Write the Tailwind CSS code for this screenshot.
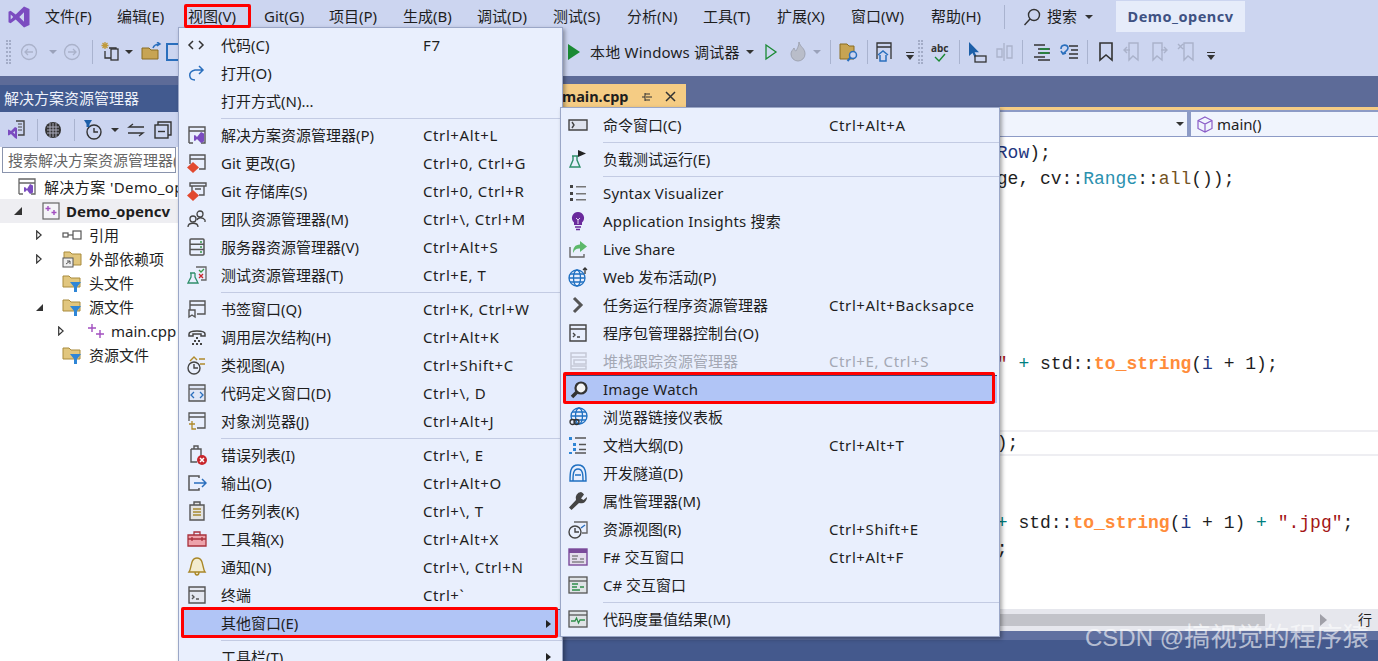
<!DOCTYPE html>
<html lang="zh-CN">
<head>
<meta charset="UTF-8">
<title>Demo_opencv - Microsoft Visual Studio</title>
<script src="https://cdn.jsdelivr.net/npm/@tailwindcss/browser@4"></script>
</head>
<body class="overflow-hidden">
<div class="relative w-[1378px] h-[661px] overflow-hidden flex flex-col bg-[#44598d] text-[15px] leading-none text-[#1e1e1e] font-['Noto_Sans','Noto_Sans_CJK_SC',sans-serif]">

  <!-- 菜单栏 -->
  <div class="h-[34px] shrink-0 flex items-center bg-[#ccd5f0] pb-[1px]">
    <div class="w-[45px] pl-[7px]">
      <svg class="w-[24px] h-[24px]" viewBox="0 0 24 24"><path fill="#7b4cc0" fill-rule="evenodd" d="M17 1.500 22.500 4v16L17 22.500 8.700 14.400 3.600 18.300 1.500 17.200V6.800l2.100-1.100 5.100 3.900zM17 7.300 12.300 12 17 16.700zM3.700 9.400v5.200L6.200 12z"/></svg>
    </div>
    <div class="w-[72px]">文件(F)</div>
    <div class="w-[71px]">编辑(E)</div>
    <div class="w-[76px]">视图(V)</div>
    <div class="w-[65px]">Git(G)</div>
    <div class="w-[74px]">项目(P)</div>
    <div class="w-[74px]">生成(B)</div>
    <div class="w-[76px]">调试(D)</div>
    <div class="w-[74px]">测试(S)</div>
    <div class="w-[76px]">分析(N)</div>
    <div class="w-[74px]">工具(T)</div>
    <div class="w-[74px]">扩展(X)</div>
    <div class="w-[80px]">窗口(W)</div>
    <div class="w-[73px]">帮助(H)</div>
    <div class="w-px h-[24px] bg-[#a9b3cf]"></div>
    <svg class="w-[20px] h-[20px] ml-[17px]" viewBox="0 0 20 20" fill="none" stroke="#333" stroke-width="1.400"><circle cx="12" cy="8" r="5.500"/><path d="M8 12 2.500 18"/></svg>
    <div class="ml-[5px]">搜索</div>
    <div class="ml-[8px] border-x-[4px] border-x-transparent border-t-[4px] border-t-[#333]"></div>
    <div class="ml-[23px] w-[129px] h-[31px] flex items-center justify-center bg-[#e6ecfa] font-bold text-[14.500px] tracking-[0.5px] text-[#3f5283]">Demo_opencv</div>
  </div>

  <!-- 工具栏 -->
  <div class="h-[42px] shrink-0 flex items-center bg-[#ccd5f0] pb-[6px]">
    <div class="ml-[6px] w-[5px] h-[24px] border-x-2 border-dotted border-[#a3acc7]"></div>
    <svg class="ml-[9px] w-[18px] h-[18px]" viewBox="0 0 18 18" fill="none" stroke="#aab2ca" stroke-width="1.300"><circle cx="9" cy="9" r="7.500"/><path d="M13 9H5m3-3L5 9l3 3"/></svg>
    <div class="ml-[11px] border-x-[4px] border-x-transparent border-t-[4px] border-t-[#9aa2ba]"></div>
    <svg class="ml-[6px] w-[18px] h-[18px]" viewBox="0 0 18 18" fill="none" stroke="#aab2ca" stroke-width="1.300"><circle cx="9" cy="9" r="7.500"/><path d="M5 9h8m-3-3 3 3-3 3"/></svg>
    <div class="ml-[11px] w-px h-[24px] bg-[#a9b3cf]"></div>
    <svg class="ml-[7px] w-[22px] h-[22px]" viewBox="0 0 22 22" fill="none" stroke="#333" stroke-width="1.300"><path stroke="#c09a3a" d="M5 1v7M1.500 4.500h7M2.500 2l5 5m0-5-5 5"/><path d="M5 10v7h6M9 7h7v9"/><rect x="11" y="8" width="7" height="11" fill="#ccd5f0"/></svg>
    <div class="ml-[3px] border-x-[4px] border-x-transparent border-t-[4px] border-t-[#333]"></div>
    <svg class="ml-[8px] w-[22px] h-[20px]" viewBox="0 0 22 20"><path fill="#c7a453" stroke="#8a6d22" d="M1 6h7l2 2h7v9H1z"/><path fill="none" stroke="#2a6fbd" stroke-width="1.500" d="M12 6c1-3 3-4 7-4m-3-2 3 2-3 2"/></svg>
    <div class="ml-[3px] w-[16px] h-[18px] border-2 border-[#2a6fbd]"></div>
    <div class="flex-1"></div>
    <!-- 调试器组 -->
    <div class="w-[811px] shrink-0 flex items-center">
      <svg class="w-[14px] h-[18px]" viewBox="0 0 14 18"><path fill="#1a8a34" d="M1 1l12 8-12 8z"/></svg>
      <div class="ml-[9px] tracking-[0.2px]">本地 Windows 调试器</div>
      <div class="ml-[6px] border-x-[4px] border-x-transparent border-t-[4px] border-t-[#333]"></div>
      <svg class="ml-[10px] w-[14px] h-[18px]" viewBox="0 0 14 18" fill="none" stroke="#1a8a34" stroke-width="1.300"><path d="M2 2l10 7-10 7z"/></svg>
      <svg class="ml-[10px] w-[20px] h-[22px]" viewBox="0 0 20 22"><path fill="#b9bdc9" stroke="#9fa4b2" d="M11 1c1 5 6 6 6 12a7 7 0 0 1-14 0c0-3 2-4 3-6 1 2 1 3 2 3 1-2 3-5 3-9z"/></svg>
      <div class="ml-[5px] border-x-[4px] border-x-transparent border-t-[4px] border-t-[#9aa2ba]"></div>
      <div class="ml-[9px] w-px h-[24px] bg-[#a9b3cf]"></div>
      <svg class="ml-[7px] w-[22px] h-[22px]" viewBox="0 0 22 22"><path fill="#c7a453" stroke="#8a6d22" d="M2 3h7l2 2h5v13H2z"/><circle cx="15" cy="14" r="3.500" fill="#ccd5f0" stroke="#2a6fbd" stroke-width="1.500"/><path stroke="#2a6fbd" stroke-width="2" d="m12.500 16.500-3 3.500"/></svg>
      <div class="ml-[7px] w-px h-[24px] bg-[#a9b3cf]"></div>
      <svg class="ml-[6px] w-[20px] h-[22px]" viewBox="0 0 20 22" fill="none" stroke="#333" stroke-width="1.300"><path d="M3 18V2h14v16M3 6h14"/><path stroke="#2a6fbd" stroke-width="1.500" d="m4 14 5-4 5 4m-8 0v6h6v-6"/></svg>
      <div class="ml-[12px] flex flex-col gap-[2px] items-center pt-[8px]"><div class="w-[8px] h-[1px] bg-[#333]"></div><div class="border-x-[4px] border-x-transparent border-t-[5px] border-t-[#333]"></div></div>
      <div class="ml-[4px] w-[5px] h-[24px] border-x-2 border-dotted border-[#a3acc7]"></div>
      <div class="ml-[7px] w-[20px] flex flex-col items-center text-[10px] font-bold leading-[10px] text-[#333]">abc<svg class="w-[12px] h-[9px]" viewBox="0 0 12 9" fill="none" stroke="#1a8a34" stroke-width="1.400"><path d="m1 4 4 4 6-7"/></svg></div>
      <div class="ml-[9px] w-px h-[24px] bg-[#a9b3cf]"></div>
      <svg class="ml-[6px] w-[22px] h-[22px]" viewBox="0 0 22 22"><path fill="#1c5fa8" d="M3 1v14l3.500-3 2.500 5 2-1-2.400-4.800H13z"/><rect x="9" y="15" width="11" height="6" fill="#ccd5f0" stroke="#333" stroke-width="1.300"/></svg>
      <svg class="ml-[7px] w-[18px] h-[22px]" viewBox="0 0 18 22" fill="none" stroke="#aab2ca" stroke-width="1.300"><path d="M2 8h5v8H2zM9 2v18M12 5h5v12h-5z"/></svg>
      <div class="ml-[9px] w-px h-[24px] bg-[#a9b3cf]"></div>
      <svg class="ml-[10px] w-[18px] h-[18px]" viewBox="0 0 18 18" fill="none" stroke="#333" stroke-width="1.400"><path d="M1 2h11M5 6h12M5 10h12M1 14h11M5 17h12"/><path stroke="#1a8a34" d="M7 6h9m-9 4h9"/></svg>
      <svg class="ml-[8px] w-[20px] h-[20px]" viewBox="0 0 20 20" fill="none" stroke="#333" stroke-width="1.400"><path d="M10 4h9M12 8h7M10 12h9M10 16h9"/><path stroke="#2a6fbd" stroke-width="1.600" d="M2 7c0-5 7-5 7-1 0 3-3 3-5 6m-2-3 2 3 3-1"/></svg>
      <div class="ml-[8px] w-px h-[24px] bg-[#a9b3cf]"></div>
      <svg class="ml-[9px] w-[18px] h-[20px]" viewBox="0 0 18 20" fill="none" stroke="#333" stroke-width="1.600"><path d="M3 1h12v17l-6-5-6 5z"/></svg>
      <svg class="ml-[8px] w-[18px] h-[20px]" viewBox="0 0 18 20" fill="none" stroke="#aab2ca" stroke-width="1.400"><path d="M6 1h9v17l-5-4-4 4zM7 8H1m3-3L1 8l3 3"/></svg>
      <svg class="ml-[9px] w-[18px] h-[20px]" viewBox="0 0 18 20" fill="none" stroke="#aab2ca" stroke-width="1.400"><path d="M3 1h9v17l-5-4-4 4zM11 8h6m-3-3 3 3-3 3"/></svg>
      <svg class="ml-[9px] w-[18px] h-[20px]" viewBox="0 0 18 20" fill="none" stroke="#aab2ca" stroke-width="1.400"><path d="M7 1h9v17l-5-4-4 4zM1 2l5 5m0-5L1 7"/></svg>
      <div class="ml-[12px] flex flex-col gap-[2px] items-center pt-[8px]"><div class="w-[8px] h-[1px] bg-[#333]"></div><div class="border-x-[4px] border-x-transparent border-t-[5px] border-t-[#333]"></div></div>
    </div>
  </div>

  <!-- 主区域 -->
  <div class="flex-1 min-h-0 flex">

    <!-- 解决方案资源管理器 -->
    <div class="w-[178px] shrink-0 flex flex-col bg-white">
      <div class="h-[9px] bg-[#5d6b98]"></div>
      <div class="h-[27px] flex items-center pl-[4px] bg-[#425a8f] text-[#eef1fa] whitespace-nowrap">解决方案资源管理器</div>
      <div class="h-[35px] flex items-center bg-[#ccd5f0]">
        <svg class="ml-[7px] w-[20px] h-[20px]" viewBox="0 0 20 20"><path fill="none" stroke="#444" stroke-width="1.400" d="M9 1h8v14h-6"/><path stroke="#444" d="M11 4h4M11 7h4M11 10h4"/><path fill="#7b4cc0" fill-rule="evenodd" d="M10 8v11l-2-1-4-4-2.300 1.500L1 15v-5l.7-.5L4 11l4-4zM8 11l-2 1.500L8 14z"/></svg>
        <div class="ml-[10px] w-px h-[22px] bg-[#a9b3cf]"></div>
        <svg class="ml-[6px] w-[18px] h-[18px]" viewBox="0 0 18 18"><circle cx="9" cy="9" r="8" fill="#333"/><path stroke="#aab" d="M3 6h12M3 9h12M3 12h12M6 2v14M9 2v14M12 2v14"/></svg>
        <div class="ml-[12px] w-px h-[22px] bg-[#a9b3cf]"></div>
        <svg class="ml-[8px] w-[22px] h-[22px]" viewBox="0 0 22 22" fill="none" stroke="#333" stroke-width="1.400"><circle cx="11" cy="13" r="7"/><path d="M11 9v4h4"/><path fill="#1c5fa8" stroke="none" d="M1 1h8L6.500 5v3h-3V5z"/></svg>
        <div class="ml-[6px] border-x-[4px] border-x-transparent border-t-[4px] border-t-[#333]"></div>
        <svg class="ml-[8px] w-[18px] h-[14px]" viewBox="0 0 18 14" fill="none" stroke="#333" stroke-width="1.300"><path d="M17 4H2l4-3M1 10h15l-4 3"/></svg>
        <svg class="ml-[9px] w-[18px] h-[18px]" viewBox="0 0 18 18" fill="none" stroke="#333" stroke-width="1.400"><path d="M4 4V1h13v13h-3"/><rect x="1" y="4" width="13" height="13" fill="#ccd5f0"/><path d="M4 10.500h7"/></svg>
      </div>
      <div class="mx-[2px] h-[26px] pl-[5px] flex items-center bg-white border border-[#8a94ad] text-[#666] overflow-hidden whitespace-nowrap">搜索解决方案资源管理器(Ctrl+;)</div>

      <div class="pt-[2px] overflow-hidden whitespace-nowrap">
        <div class="h-[24px] flex items-center pl-[18px]">
          <svg class="shrink-0 w-[18px] h-[18px]" viewBox="0 0 18 18"><path fill="none" stroke="#666" stroke-width="1.300" d="M1 16V1h16v15H13M1 5h16M1 16h4"/><path fill="#7b4cc0" d="m12 6 3 1.500v7L12 16l-3-4-2 2-1-.5v-4l1-.5 2 2z"/></svg>
          <span class="ml-[8px] tracking-[0.4px]">解决方案 'Demo_opencv'</span>
        </div>
        <div class="h-[24px] flex items-center bg-[#eeeef2] pl-[14px]">
          <svg class="shrink-0 w-[8px] h-[8px]" viewBox="0 0 8 8"><path fill="#333" d="M8 0v8H0z"/></svg>
          <svg class="shrink-0 ml-[20px] w-[18px] h-[18px]" viewBox="0 0 18 18" fill="none" stroke="#666" stroke-width="1.200"><rect x="1" y="1" width="16" height="16" fill="#f4f4f8"/><path stroke="#a24fc0" stroke-width="1.400" d="M6 4v5M3.500 6.500h5M12 8v5M9.500 10.500h5"/></svg>
          <span class="ml-[6px] font-bold">Demo_opencv</span>
        </div>
        <div class="h-[24px] flex items-center pl-[36px]">
          <svg class="shrink-0 w-[6px] h-[10px]" viewBox="0 0 6 10" fill="none" stroke="#333" stroke-width="1.200"><path d="m.7 1 4.500 4-4.500 4z"/></svg>
          <svg class="shrink-0 ml-[20px] w-[20px] h-[10px]" viewBox="0 0 20 10" fill="none" stroke="#555" stroke-width="1.200"><rect x="1" y="3" width="5" height="4"/><rect x="11" y="1" width="8" height="8"/><path d="M6 5h5"/></svg>
          <span class="ml-[7px]">引用</span>
        </div>
        <div class="h-[24px] flex items-center pl-[36px]">
          <svg class="shrink-0 w-[6px] h-[10px]" viewBox="0 0 6 10" fill="none" stroke="#333" stroke-width="1.200"><path d="m.7 1 4.500 4-4.500 4z"/></svg>
          <svg class="shrink-0 ml-[20px] w-[20px] h-[18px]" viewBox="0 0 20 18"><path fill="#e1c67e" stroke="#a98b3c" d="M2 2h6l2 2h9v11H2z"/><rect x="1" y="8" width="10" height="9" fill="#eee" stroke="#555"/><path stroke="#555" fill="none" d="m4 14 4-3m-3 0h3v3"/></svg>
          <span class="ml-[7px]">外部依赖项</span>
        </div>
        <div class="h-[24px] flex items-center pl-[62px]">
          <svg class="shrink-0 w-[20px] h-[18px]" viewBox="0 0 20 18"><path fill="#e1c67e" stroke="#a98b3c" d="M1 2h6l2 2h9v9H1z"/><path fill="#2f86d6" d="M8 8h11l-4 5v5h-3v-5z"/></svg>
          <span class="ml-[7px]">头文件</span>
        </div>
        <div class="h-[24px] flex items-center pl-[36px]">
          <svg class="shrink-0 w-[7px] h-[7px]" viewBox="0 0 8 8"><path fill="#333" d="M8 0v8H0z"/></svg>
          <svg class="shrink-0 ml-[19px] w-[20px] h-[18px]" viewBox="0 0 20 18"><path fill="#e1c67e" stroke="#a98b3c" d="M1 2h6l2 2h9v9H1z"/><path fill="#2f86d6" d="M8 8h11l-4 5v5h-3v-5z"/></svg>
          <span class="ml-[7px]">源文件</span>
        </div>
        <div class="h-[24px] flex items-center pl-[58px]">
          <svg class="shrink-0 w-[6px] h-[10px]" viewBox="0 0 6 10" fill="none" stroke="#333" stroke-width="1.200"><path d="m.7 1 4.500 4-4.500 4z"/></svg>
          <svg class="shrink-0 ml-[22px] w-[20px] h-[18px]" viewBox="0 0 20 18" fill="none" stroke="#a24fc0" stroke-width="1.400"><path d="M6 2v8M2 6h8M14 8v8M10 12h8"/></svg>
          <span class="ml-[5px]">main.cpp</span>
        </div>
        <div class="h-[24px] flex items-center pl-[62px]">
          <svg class="shrink-0 w-[20px] h-[18px]" viewBox="0 0 20 18"><path fill="#e1c67e" stroke="#a98b3c" d="M1 2h6l2 2h9v9H1z"/><path fill="#2f86d6" d="M8 8h11l-4 5v5h-3v-5z"/></svg>
          <span class="ml-[7px]">资源文件</span>
        </div>
      </div>
    </div>

    <!-- 编辑器 -->
    <div class="flex-1 min-w-0 flex flex-col">
      <div class="h-[31px] shrink-0 bg-[#5d6b98] flex items-end pl-[352px]">
        <div class="w-[156px] h-[23px] bg-[#f5cc84] flex items-center font-bold pl-[32px] pt-[2px] text-[14.500px]">
          <span>main.cpp</span>
          <svg class="ml-[13px] w-[12px] h-[12px]" viewBox="0 0 12 12" fill="none" stroke="#333"><path d="M11 6H5M4 2v8M4 3h5M4 9h5M1 6h3"/></svg>
          <svg class="ml-[12px] w-[11px] h-[11px]" viewBox="0 0 11 11" fill="none" stroke="#333" stroke-width="1.500"><path d="m1 1 9 9m0-9-9 9"/></svg>
        </div>
      </div>
      <div class="h-[3px] shrink-0 bg-[#f5cc84]"></div>
      <div class="h-[27px] shrink-0 flex items-stretch bg-[#8d9bc6] pt-[2px] pb-[1px] gap-[4px]">
        <div class="w-[1009px] bg-[#f0f4fd] flex items-center justify-end pr-[3px]"><div class="border-x-[4px] border-x-transparent border-t-[4px] border-t-[#333]"></div></div>
        <div class="flex-1 bg-[#f0f4fd] flex items-center pl-[6px]">
          <svg class="w-[16px] h-[17px]" viewBox="0 0 16 17" fill="none" stroke="#8a5cc7" stroke-width="1.200"><path d="m8 1 7 3.500v8L8 16l-7-3.500v-8zM1 4.500 8 8l7-3.500M8 8v8"/></svg>
          <span class="ml-[4px]">main()</span>
        </div>
      </div>
      <div class="flex-1 min-h-0 relative bg-white overflow-hidden whitespace-nowrap font-['Liberation_Mono',monospace] text-[18px] leading-[26.4px] pl-[818.8px] pt-[3px]">
        <div class="absolute left-0 right-0 top-[293px] h-[26px] border-y-2 border-[#eeeef2]"></div>
        <div class="relative">
          <div class="h-[26.400px]"><span class="text-[#1f377f]">Row</span>);</div>
          <div class="h-[26.400px]">ge, cv::<span class="text-[#2b91af]">Range</span>::<span class="text-[#74531f]">all</span>());</div>
          <div class="h-[158.400px]"></div>
          <div class="h-[26.400px]"><span class="text-[#a31515]">"</span> <span class="text-[#008080]">+</span> std::<span class="text-[#ff8c3a] font-bold">to_string</span>(<span class="text-[#1f377f]">i</span> + 1);</div>
          <div class="h-[52.800px]"></div>
          <div class="h-[26.400px]">);</div>
          <div class="h-[52.800px]"></div>
          <div class="h-[26.400px]"><span class="text-[#008080]">+</span> std::<span class="text-[#ff8c3a] font-bold">to_string</span>(<span class="text-[#1f377f]">i</span> + 1) <span class="text-[#008080]">+</span> <span class="text-[#a31515]">".jpg"</span>;</div>
          <div class="h-[26.400px]">;</div>
        </div>
      </div>
      <div class="h-[22px] shrink-0 bg-[#e6e7ed] flex items-center">
        <div class="w-[1087px] h-[12px] bg-[#c2c3c9]"></div>
        <div class="ml-[55px] w-0 h-0 border-y-[6px] border-y-transparent border-l-[7px] border-l-[#a0a0a8]"></div>
        <div class="ml-[31px] text-[14px]">行</div>
      </div>
      <div class="h-[9px] shrink-0 bg-[#6070a0]"></div>
      <div class="h-[21px] shrink-0 bg-[#44598d]"></div>
    </div>
  </div>

  <!-- 视图菜单 -->
  <div class="absolute left-[178px] top-[27px] w-[385px] h-[650px] bg-[#e9effd] border border-[#9ba7c7] pt-[3px] shadow-[2px_2px_4px_rgba(0,0,0,0.35)] [&>div>span:nth-child(3)]:tracking-[0.6px]">
    <div class="grid grid-cols-[42px_202px_1fr] h-[28px] items-center"><svg class="ml-[8px] w-[18px] h-[18px]" viewBox="0 0 18 18" fill="none" stroke="#333" stroke-width="1.500"><path d="M6 5 2 9l4 4M12 5l4 4-4 4"/></svg><span>代码(C)</span><span>F7</span></div>
    <div class="grid grid-cols-[42px_202px_1fr] h-[28px] items-center"><svg class="ml-[8px] w-[18px] h-[18px]" viewBox="0 0 18 18" fill="none" stroke="#2a6fbd" stroke-width="1.500"><path d="M8 16C2 16 0 8 8 6h8m-4-4 4 4-4 4"/></svg><span>打开(O)</span><span></span></div>
    <div class="grid grid-cols-[42px_202px_1fr] h-[28px] items-center"><span></span><span>打开方式(N)...</span><span></span></div>
    <div class="h-[6px] flex items-center pl-[42px]"><div class="w-full h-px bg-[#c3cbe3]"></div></div>
    <div class="grid grid-cols-[42px_202px_1fr] h-[28px] items-center"><svg class="ml-[8px] w-[20px] h-[20px]" viewBox="0 0 20 20"><path fill="none" stroke="#555" stroke-width="1.400" d="M2 18V2h16v16h-4M2 6h16M2 18h4"/><path fill="#7b4cc0" d="m14 7 3 1.500v8L14 18l-4-4-2 2-1-.5v-5l1-.5 2 2z"/></svg><span>解决方案资源管理器(P)</span><span>Ctrl+Alt+L</span></div>
    <div class="grid grid-cols-[42px_202px_1fr] h-[28px] items-center"><svg class="ml-[8px] w-[20px] h-[20px]" viewBox="0 0 20 20"><path fill="none" stroke="#555" stroke-width="1.400" d="M3 11V2h15v14h-6M3 6h15"/><path fill="#e2492f" d="m6 9 6 5.500L6 20l-6-5.500z"/></svg><span>Git 更改(G)</span><span>Ctrl+0, Ctrl+G</span></div>
    <div class="grid grid-cols-[42px_202px_1fr] h-[28px] items-center"><svg class="ml-[8px] w-[20px] h-[20px]" viewBox="0 0 20 20"><path fill="none" stroke="#555" stroke-width="1.400" d="M3 2h16v3H3zM5 5v6M17 5v9h-5M8 8h6"/><path fill="#e2492f" d="m6 9 6 5.500L6 20l-6-5.500z"/></svg><span>Git 存储库(S)</span><span>Ctrl+0, Ctrl+R</span></div>
    <div class="grid grid-cols-[42px_202px_1fr] h-[28px] items-center"><svg class="ml-[8px] w-[20px] h-[20px]" viewBox="0 0 20 20" fill="none" stroke="#444" stroke-width="1.300"><circle cx="13" cy="5" r="3"/><path d="M10 11c1-3 6-3 8 0v2"/><circle cx="6" cy="10" r="3" fill="#e9effd"/><path d="M1 18c0-5 10-5 10 0"/></svg><span>团队资源管理器(M)</span><span>Ctrl+\, Ctrl+M</span></div>
    <div class="grid grid-cols-[42px_202px_1fr] h-[28px] items-center"><svg class="ml-[8px] w-[20px] h-[20px]" viewBox="0 0 20 20" fill="none" stroke="#555" stroke-width="1.500"><rect x="3" y="2" width="14" height="16" rx="1"/><path d="M3 7.300h14M3 12.600h14"/><path stroke="#3a9a4a" d="M13 5h2M13 10h2M13 15h2"/></svg><span>服务器资源管理器(V)</span><span>Ctrl+Alt+S</span></div>
    <div class="grid grid-cols-[42px_202px_1fr] h-[28px] items-center"><svg class="ml-[8px] w-[20px] h-[20px]" viewBox="0 0 20 20" fill="none" stroke-width="1.300"><path stroke="#666" d="M9 2h10v13h-5"/><path stroke="#2f8f6b" d="M3 8h5M4 8v4l-3 6h10l-3-6V8"/><path stroke="#3a9a4a" d="m12 5 2 2 3-3"/><path stroke="#c8262c" d="m12 9 4 4m0-4-4 4"/></svg><span>测试资源管理器(T)</span><span>Ctrl+E, T</span></div>
    <div class="h-[6px] flex items-center pl-[42px]"><div class="w-full h-px bg-[#c3cbe3]"></div></div>
    <div class="grid grid-cols-[42px_202px_1fr] h-[28px] items-center"><svg class="ml-[8px] w-[20px] h-[20px]" viewBox="0 0 20 20" fill="none" stroke="#555" stroke-width="1.400"><path d="M3 11V2h15v13h-8M3 6h15M2 11h6v7l-3-2-3 2z"/></svg><span>书签窗口(Q)</span><span>Ctrl+K, Ctrl+W</span></div>
    <div class="grid grid-cols-[42px_202px_1fr] h-[28px] items-center"><svg class="ml-[8px] w-[20px] h-[20px]" viewBox="0 0 20 20"><path fill="none" stroke="#444" stroke-width="1.500" d="M2 7c0-4 16-4 16 0v2h-4V7H6v2H2z"/><path stroke="#444" stroke-width="2" stroke-dasharray="2 2" d="M9 11h2M7 14h6M5 17h10"/></svg><span>调用层次结构(H)</span><span>Ctrl+Alt+K</span></div>
    <div class="grid grid-cols-[42px_202px_1fr] h-[28px] items-center"><svg class="ml-[8px] w-[20px] h-[20px]" viewBox="0 0 20 20" fill="none" stroke-width="1.400"><circle cx="7" cy="13" r="6" stroke="#444"/><path stroke="#444" d="M7 9v4h4"/><path stroke="#b08a2c" d="m3 6 4-4 3 3M12 4h6M13 9h5"/></svg><span>类视图(A)</span><span>Ctrl+Shift+C</span></div>
    <div class="grid grid-cols-[42px_202px_1fr] h-[28px] items-center"><svg class="ml-[8px] w-[20px] h-[20px]" viewBox="0 0 20 20" fill="none" stroke-width="1.300"><path fill="#dfe6f6" stroke="#555" d="M2 2h16v16H2z"/><path stroke="#555" d="M2 6h16"/><path stroke="#2a6fbd" d="M7 9l-3 3 3 3M13 9l3 3-3 3"/></svg><span>代码定义窗口(D)</span><span>Ctrl+\, D</span></div>
    <div class="grid grid-cols-[42px_202px_1fr] h-[28px] items-center"><svg class="ml-[8px] w-[20px] h-[20px]" viewBox="0 0 20 20" fill="none" stroke-width="1.300"><path stroke="#555" d="M2 10V2h16v15h-8M2 6h16"/><path stroke="#b08a2c" d="M5 10v8h4M2 13h6"/></svg><span>对象浏览器(J)</span><span>Ctrl+Alt+J</span></div>
    <div class="h-[6px] flex items-center pl-[42px]"><div class="w-full h-px bg-[#c3cbe3]"></div></div>
    <div class="grid grid-cols-[42px_202px_1fr] h-[28px] items-center"><svg class="ml-[8px] w-[20px] h-[20px]" viewBox="0 0 20 20" fill="none"><path stroke="#555" stroke-width="1.400" d="M4 4h10v8M4 4v13h6M7 4V1h4v3"/><circle cx="15" cy="15" r="5" fill="#c8262c"/><path stroke="#fff" stroke-width="1.500" d="m13 13 4 4m0-4-4 4"/></svg><span>错误列表(I)</span><span>Ctrl+\, E</span></div>
    <div class="grid grid-cols-[42px_202px_1fr] h-[28px] items-center"><svg class="ml-[8px] w-[20px] h-[20px]" viewBox="0 0 20 20" fill="none" stroke-width="1.500"><path stroke="#555" d="M12 5V3H2v14h10v-2"/><path stroke="#2a6fbd" d="M7 10h12m-4-4 4 4-4 4"/></svg><span>输出(O)</span><span>Ctrl+Alt+O</span></div>
    <div class="grid grid-cols-[42px_202px_1fr] h-[28px] items-center"><svg class="ml-[8px] w-[20px] h-[20px]" viewBox="0 0 20 20" fill="none" stroke-width="1.400"><path fill="#e3e3e3" stroke="#555" d="M3 4h14v15H3zM7 4V1h6v3"/><path stroke="#a88a32" d="M6 8h8M6 11h8M6 14h8"/></svg><span>任务列表(K)</span><span>Ctrl+\, T</span></div>
    <div class="grid grid-cols-[42px_202px_1fr] h-[28px] items-center"><svg class="ml-[8px] w-[20px] h-[20px]" viewBox="0 0 20 20" fill="none" stroke="#a8323c" stroke-width="1.300"><path fill="#eda3ab" d="M1 6h18v11H1z"/><path d="M7 6V3h6v3M1 10h18M5 8v4M15 8v4"/></svg><span>工具箱(X)</span><span>Ctrl+Alt+X</span></div>
    <div class="grid grid-cols-[42px_202px_1fr] h-[28px] items-center"><svg class="ml-[8px] w-[20px] h-[20px]" viewBox="0 0 20 20" fill="none" stroke="#a98728" stroke-width="1.400"><path fill="#f3eccf" d="M10 1c-7 0-5 10-8 14h16C15 11 17 1 10 1zM8 15c0 4 4 4 4 0"/></svg><span>通知(N)</span><span>Ctrl+\, Ctrl+N</span></div>
    <div class="grid grid-cols-[42px_202px_1fr] h-[28px] items-center"><svg class="ml-[8px] w-[20px] h-[20px]" viewBox="0 0 20 20" fill="none" stroke="#555" stroke-width="1.400"><path fill="#e4e7f0" d="M2 2h16v16H2z"/><path d="M2 6h16M5 10l2 2-2 2M9 14h3"/></svg><span>终端</span><span>Ctrl+`</span></div>
    <div class="relative grid grid-cols-[40px_202px_1fr] h-[28px] items-center mx-[2px] bg-[#b1c5f6] border-t border-[#34497e]"><span></span><span>其他窗口(E)</span><span></span><div class="absolute right-[9px] top-[10px] w-0 h-0 border-y-[4px] border-y-transparent border-l-[5px] border-l-[#222]"></div></div>
    <div class="h-[6px] flex items-center pl-[42px]"><div class="w-full h-px bg-[#c3cbe3]"></div></div>
    <div class="relative grid grid-cols-[42px_202px_1fr] h-[28px] items-center"><span></span><span>工具栏(T)</span><span></span><div class="absolute right-[11px] top-[10px] w-0 h-0 border-y-[4px] border-y-transparent border-l-[5px] border-l-[#222]"></div></div>
  </div>

  <!-- 其他窗口子菜单 -->
  <div class="absolute left-[560px] top-[107px] w-[440px] h-[530px] bg-[#e9effd] border border-[#9ba7c7] pt-[3px] shadow-[2px_2px_4px_rgba(0,0,0,0.35)] [&>div>span:nth-child(3)]:tracking-[0.6px]">
    <div class="grid grid-cols-[42px_226px_1fr] h-[28px] items-center"><svg class="ml-[7px] w-[20px] h-[20px]" viewBox="0 0 20 20" fill="none" stroke="#444" stroke-width="1.400"><path fill="#dfe3ee" d="M1 5h18v10H1z"/><path d="m4 7 2 3-2 3"/></svg><span>命令窗口(C)</span><span>Ctrl+Alt+A</span></div>
    <div class="h-[6px] flex items-center pl-[42px]"><div class="w-full h-px bg-[#c3cbe3]"></div></div>
    <div class="grid grid-cols-[42px_226px_1fr] h-[28px] items-center"><svg class="ml-[7px] w-[20px] h-[20px]" viewBox="0 0 20 20"><path fill="none" stroke="#2f8f6b" stroke-width="1.400" d="M4 7h6M5 7v4l-3 7h10l-3-7V7"/><path fill="#222" d="M10 1v7l8-3.500z"/></svg><span>负载测试运行(E)</span><span></span></div>
    <div class="h-[6px] flex items-center pl-[42px]"><div class="w-full h-px bg-[#c3cbe3]"></div></div>
    <div class="grid grid-cols-[42px_226px_1fr] h-[28px] items-center"><svg class="ml-[7px] w-[20px] h-[20px]" viewBox="0 0 20 20" fill="#444"><path d="M2 2h3v3H2zM2 9h3v3H2zM2 15h3v3H2z"/><path fill="#777" d="M8 3h10v1.500H8zM8 10h10v1.500H8zM8 16h10v1.500H8z"/></svg><span class="tracking-[0.15px]">Syntax Visualizer</span><span></span></div>
    <div class="grid grid-cols-[42px_226px_1fr] h-[28px] items-center"><svg class="ml-[7px] w-[20px] h-[20px]" viewBox="0 0 20 20"><path fill="#6a2a9c" d="M10 1a6 6 0 0 0-4 10.500V14h8v-2.500A6 6 0 0 0 10 1z"/><path stroke="#6a2a9c" stroke-width="1.500" d="M7 16h6M8 18.500h4"/><path stroke="#e5d7f2" fill="none" d="m8 7 2 2 2-2M10 9v4"/></svg><span class="tracking-[0.2px]">Application Insights 搜索</span><span></span></div>
    <div class="grid grid-cols-[42px_226px_1fr] h-[28px] items-center"><svg class="ml-[7px] w-[20px] h-[20px]" viewBox="0 0 20 20"><path fill="none" stroke="#666" stroke-width="1.400" d="M2 8v10h14v-3"/><path fill="#5cb86a" d="M12 2v3.500C7 5.500 5 9 5 14c2-4 4-4.500 7-4.500V13l7-5.500z"/></svg><span>Live Share</span><span></span></div>
    <div class="grid grid-cols-[42px_226px_1fr] h-[28px] items-center"><svg class="ml-[7px] w-[20px] h-[20px]" viewBox="0 0 20 20" fill="none" stroke="#1f70c1" stroke-width="1.300"><circle cx="9" cy="11" r="8"/><ellipse cx="9" cy="11" rx="3.500" ry="8"/><path d="M1 11h16M2 7h14M2 15h14"/><path stroke="#333" d="M17 7V1m-2 2 2-2 2 2"/></svg><span>Web 发布活动(P)</span><span></span></div>
    <div class="grid grid-cols-[42px_226px_1fr] h-[28px] items-center"><svg class="ml-[7px] w-[20px] h-[20px]" viewBox="0 0 20 20" fill="none" stroke="#555" stroke-width="3"><path d="m6 3 7 7-7 7"/></svg><span>任务运行程序资源管理器</span><span>Ctrl+Alt+Backsapce</span></div>
    <div class="grid grid-cols-[42px_226px_1fr] h-[28px] items-center"><svg class="ml-[7px] w-[20px] h-[20px]" viewBox="0 0 20 20" fill="none" stroke="#444" stroke-width="1.400"><path d="M2 2h16v16H2zM2 6h16M5 10l2 2-2 2M9 14h3"/></svg><span>程序包管理器控制台(O)</span><span></span></div>
    <div class="grid grid-cols-[42px_226px_1fr] h-[28px] items-center text-[#a4a8b4]"><svg class="ml-[7px] w-[20px] h-[20px]" viewBox="0 0 20 20" fill="none" stroke="#c5c9d6" stroke-width="1.500"><path d="M3 2h15v4H3zM6 9h12v4H6zM3 15h15v3H3zM3 6v9"/></svg><span>堆栈跟踪资源管理器</span><span>Ctrl+E, Ctrl+S</span></div>
    <div class="grid grid-cols-[40px_226px_1fr] h-[28px] items-center mx-[2px] bg-[#b1c5f6] border-t border-[#34497e]"><svg class="ml-[6px] w-[20px] h-[20px]" viewBox="0 0 20 20" fill="none"><circle cx="12" cy="8" r="5.500" fill="#f4f4f4" stroke="#333" stroke-width="2.200"/><path stroke="#333" stroke-width="3.500" d="M8 12 3 17"/></svg><span class="tracking-[0.2px]">Image Watch</span><span></span></div>
    <div class="grid grid-cols-[42px_226px_1fr] h-[28px] items-center"><svg class="ml-[7px] w-[20px] h-[20px]" viewBox="0 0 20 20" fill="none" stroke="#1f70c1" stroke-width="1.300"><circle cx="11" cy="9" r="8"/><ellipse cx="11" cy="9" rx="3.500" ry="8"/><path d="M3 9h16M4 5h14M4 13h14"/><circle cx="4.500" cy="15" r="2.500" fill="#e9effd" stroke="#333"/><circle cx="8.500" cy="15" r="2.500" stroke="#333"/></svg><span>浏览器链接仪表板</span><span></span></div>
    <div class="grid grid-cols-[42px_226px_1fr] h-[28px] items-center"><svg class="ml-[7px] w-[20px] h-[20px]" viewBox="0 0 20 20"><path fill="#2f86d6" d="M1 2h3v3H1zM5 8h3v3H5zM5 13h3v3H5zM1 17h3v2H1z"/><path stroke="#555" stroke-width="1.400" d="M7 3h11M11 9.500h7M11 14.500h7M7 18h11"/></svg><span>文档大纲(D)</span><span>Ctrl+Alt+T</span></div>
    <div class="grid grid-cols-[42px_226px_1fr] h-[28px] items-center"><svg class="ml-[7px] w-[20px] h-[20px]" viewBox="0 0 20 20" fill="none" stroke="#1f70c1" stroke-width="1.400"><path d="M2 18C2 10 2 2 10 2s8 8 8 16z"/><path d="M5 18c0-6 0-12 5-12s5 6 5 12M7 12h6"/></svg><span>开发隧道(D)</span><span></span></div>
    <div class="grid grid-cols-[42px_226px_1fr] h-[28px] items-center"><svg class="ml-[7px] w-[20px] h-[20px]" viewBox="0 0 20 20"><path fill="#444" d="M13 1a6 6 0 0 0-5 8L1 16.500 3.500 19l7.500-7a6 6 0 0 0 8-6l-3.500 3L13 7.500 16 3.500A6 6 0 0 0 13 1z"/></svg><span>属性管理器(M)</span><span></span></div>
    <div class="grid grid-cols-[42px_226px_1fr] h-[28px] items-center"><svg class="ml-[7px] w-[20px] h-[20px]" viewBox="0 0 20 20" fill="none" stroke="#444" stroke-width="1.400"><path stroke="#666" d="M6 3h13v11h-5"/><circle cx="7" cy="13" r="6" fill="#e9effd"/><path d="M7 9v4h4"/><path stroke="#2a6fbd" d="m13 9 4-3"/></svg><span>资源视图(R)</span><span>Ctrl+Shift+E</span></div>
    <div class="grid grid-cols-[42px_226px_1fr] h-[28px] items-center"><svg class="ml-[7px] w-[20px] h-[20px]" viewBox="0 0 20 20"><rect x="1" y="2" width="18" height="16" fill="#e3dcec" stroke="#7a4a9a" stroke-width="1.400"/><path fill="#7a4a9a" d="M1 2h18v4H1z"/><path stroke="#555" d="M4 9h6M4 12h5M12 12h4M4 15h12"/></svg><span>F# 交互窗口</span><span>Ctrl+Alt+F</span></div>
    <div class="grid grid-cols-[42px_226px_1fr] h-[28px] items-center"><svg class="ml-[7px] w-[20px] h-[20px]" viewBox="0 0 20 20" fill="none" stroke="#555" stroke-width="1.300"><rect x="1" y="2" width="18" height="16" fill="#dfe3e6"/><path d="M1 6h18"/><path stroke="#2f8f4a" d="M4 9h6M4 12h5M12 12h4M4 15h8"/></svg><span>C# 交互窗口</span><span></span></div>
    <div class="h-[6px] flex items-center pl-[42px]"><div class="w-full h-px bg-[#c3cbe3]"></div></div>
    <div class="grid grid-cols-[42px_226px_1fr] h-[28px] items-center"><svg class="ml-[7px] w-[20px] h-[20px]" viewBox="0 0 20 20" fill="none" stroke="#555" stroke-width="1.300"><rect x="1" y="2" width="18" height="16" fill="#dfe3e6"/><path d="M1 6h18"/><path stroke="#2f8f4a" d="M3 12h4l1.500-3 2 5 1.500-3h5"/></svg><span>代码度量值结果(M)</span><span></span></div>
  </div>

  <!-- 红色标注框 -->
  <div class="absolute left-[184px] top-[4px] w-[67px] h-[24px] border-[3px] border-[#ff0000] rounded-[2px]"></div>
  <div class="absolute left-[181px] top-[607px] w-[377px] h-[31px] border-[3px] border-[#ff0000] rounded-[2px]"></div>
  <div class="absolute left-[563px] top-[372px] w-[432px] h-[32px] border-[3px] border-[#ff0000] rounded-[2px]"></div>

  <!-- 水印 -->
  <div class="absolute left-[1085px] top-[622px] text-[24px] leading-[30px] text-white/60 whitespace-nowrap font-['Liberation_Sans','Noto_Sans_CJK_SC',sans-serif]">CSDN @<span class="text-[26.400px]">搞视觉的程序猿</span></div>
</div>
</body>
</html>
